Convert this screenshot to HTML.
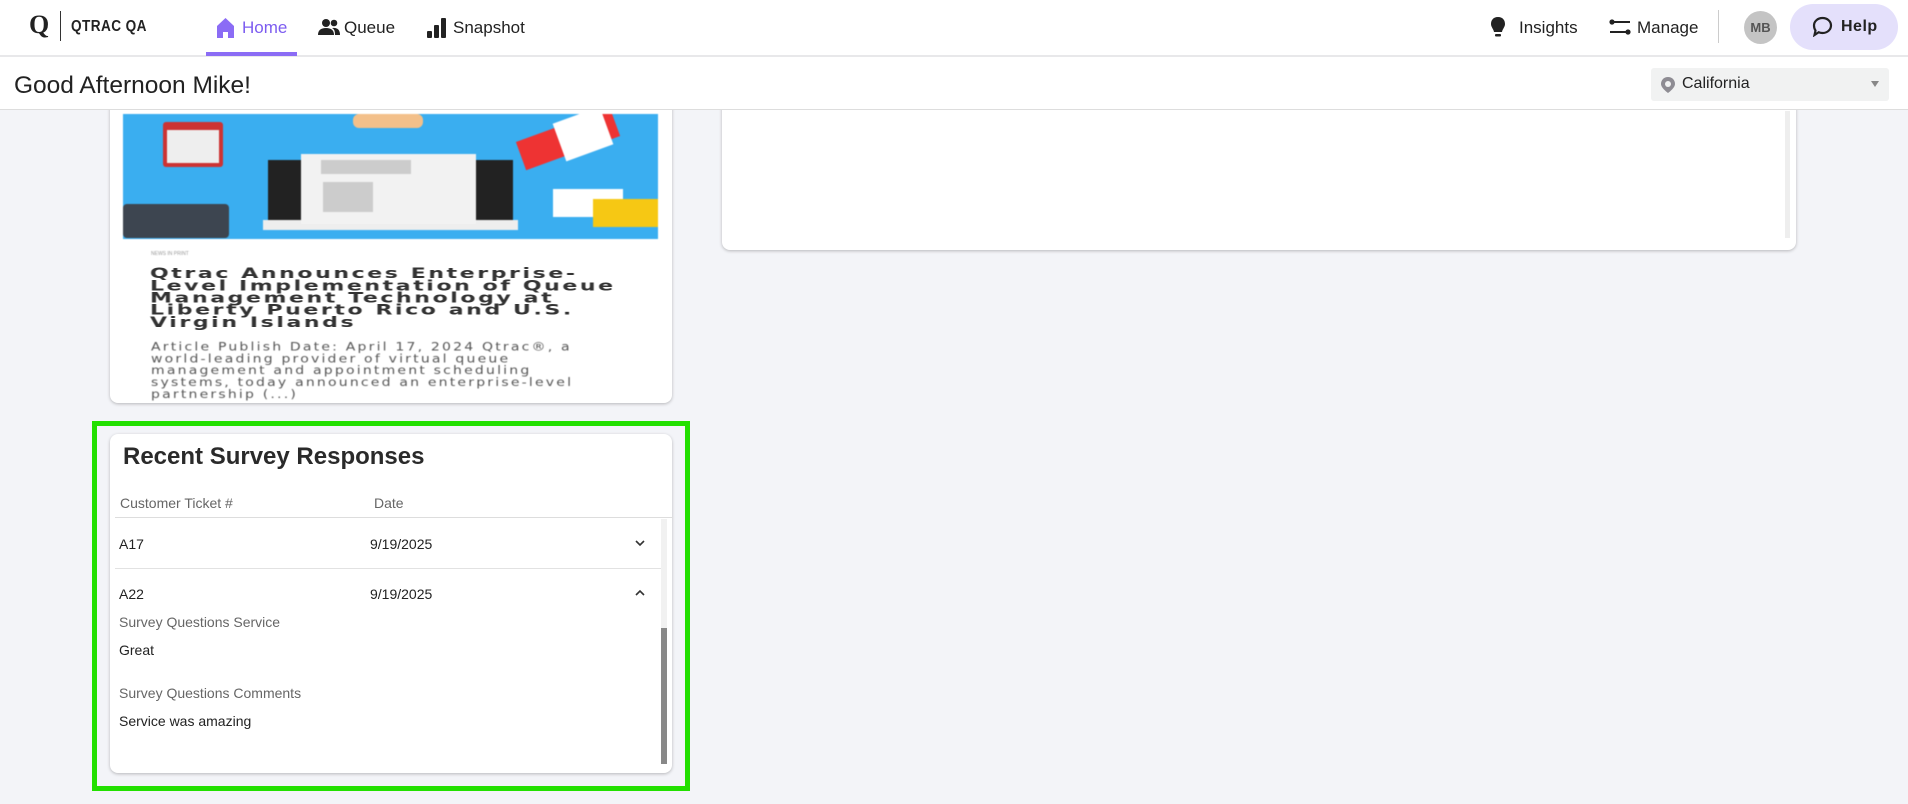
<!DOCTYPE html>
<html><head><meta charset="utf-8">
<style>
*{box-sizing:border-box;margin:0;padding:0}
body{width:1908px;height:804px;overflow:hidden;background:#f3f4f8;font-family:"Liberation Sans",sans-serif;color:#222;position:relative}
.abs{position:absolute}
.nav{left:0;top:0;width:1908px;height:57px;background:#fff;border-bottom:2px solid #e8e8ea}
.sub{left:0;top:57px;width:1908px;height:53px;background:#fff;border-bottom:1px solid #ddd}
.navtxt{font-size:17px;color:#222;top:18px}
.card{background:#fff;border-radius:8px;box-shadow:0 1px 3px rgba(0,0,0,.25)}
</style></head><body>
<div class="abs card" style="left:110px;top:90px;width:562px;height:313px;border-top-left-radius:0;border-top-right-radius:0"></div>
<div class="abs card" style="left:722px;top:90px;width:1074px;height:160px;border-top-left-radius:0;border-top-right-radius:0"></div>
<div class="abs" style="left:1785px;top:111px;width:5px;height:127px;background:#eee"></div>

<div class="abs nav"></div>
<div class="abs" style="left:29px;top:12px;font-family:'Liberation Serif',serif;font-weight:bold;font-size:26px;line-height:26px">Q</div>
<div class="abs" style="left:60px;top:11px;width:1px;height:30px;background:#333"></div>
<div class="abs" style="left:71px;top:18px;font-size:16px;font-weight:bold;letter-spacing:0.5px;transform:scaleX(.85);transform-origin:left">QTRAC QA</div>
<svg class="abs" style="left:215px;top:17px" width="21" height="22" viewBox="0 0 21 22"><path d="M2 9 L10.5 1 L19 9 V21 H13 V15 H8 V21 H2Z" fill="#8b6cf5"/></svg>
<div class="abs navtxt" style="left:242px;color:#7c5cf0">Home</div>
<div class="abs" style="left:206px;top:52px;width:91px;height:4px;background:#8b6cf5"></div>
<svg class="abs" style="left:318px;top:19px" width="22" height="16" viewBox="0 0 22 16"><circle cx="8" cy="4" r="4" fill="#222"/><circle cx="16" cy="4" r="3.3" fill="#222"/><path d="M0 16 Q0 9 8 9 Q16 9 16 16Z" fill="#222"/><path d="M17 16 Q17 10 14 9 Q22 8 22 16Z" fill="#222"/></svg>
<div class="abs navtxt" style="left:344px">Queue</div>
<svg class="abs" style="left:427px;top:17px" width="20" height="21" viewBox="0 0 20 21"><rect x="0" y="14" width="5" height="7" rx="1" fill="#222"/><rect x="7" y="8" width="5" height="13" rx="1" fill="#222"/><rect x="14" y="1" width="5" height="20" rx="1" fill="#222"/></svg>
<div class="abs navtxt" style="left:453px">Snapshot</div>
<svg class="abs" style="left:1491px;top:17px" width="14" height="21" viewBox="0 0 14 21"><path d="M7 0 C2 0 0 3.5 0 7 C0 10 2.5 12 3 15 H11 C11.5 12 14 10 14 7 C14 3.5 12 0 7 0Z" fill="#222"/><rect x="4" y="17" width="6" height="2.5" rx="1" fill="#222"/></svg>
<div class="abs navtxt" style="left:1519px">Insights</div>
<svg class="abs" style="left:1609px;top:19px" width="22" height="17" viewBox="0 0 22 17"><circle cx="3" cy="3" r="2.6" fill="#222"/><line x1="3" y1="3" x2="21" y2="3" stroke="#222" stroke-width="2"/><circle cx="19" cy="13" r="2.6" fill="#222"/><line x1="1" y1="13" x2="19" y2="13" stroke="#222" stroke-width="2"/></svg>
<div class="abs navtxt" style="left:1637px">Manage</div>
<div class="abs" style="left:1718px;top:10px;width:1px;height:33px;background:#ccc"></div>
<div class="abs" style="left:1744px;top:11px;width:33px;height:33px;border-radius:50%;background:#c4c4c4;color:#555;font-size:13px;font-weight:bold;text-align:center;line-height:33px">MB</div>
<div class="abs" style="left:1790px;top:4px;width:108px;height:46px;border-radius:23px;background:#e4e0fb"></div>
<svg class="abs" style="left:1812px;top:16px" width="21" height="21" viewBox="0 0 21 21"><path d="M10.5 2 C15.5 2 19 5.5 19 9.5 C19 13.5 15.5 17 10.5 17 C9 17 7.8 16.7 6.7 16.2 L2.5 19 L3.5 14.5 C2.5 13 2 11.5 2 9.5 C2 5.5 5.5 2 10.5 2Z" fill="none" stroke="#222" stroke-width="2.2"/></svg>
<div class="abs" style="left:1841px;top:18px;font-size:16px;font-weight:bold;letter-spacing:.5px">Help</div>

<div class="abs sub"></div>
<div class="abs" style="left:14px;top:72px;font-size:24.5px;color:#222">Good Afternoon Mike!</div>
<div class="abs" style="left:1651px;top:68px;width:238px;height:33px;background:#f1f2f2;border-radius:3px"></div>
<svg class="abs" style="left:1661px;top:77px" width="14" height="16" viewBox="0 0 14 16"><path d="M7 0 C11 0 14 3 14 7 C14 11 7 16 7 16 C7 16 0 11 0 7 C0 3 3 0 7 0Z" fill="#8e8c93"/><circle cx="7" cy="7" r="3" fill="#f1f2f2"/></svg>
<div class="abs" style="left:1682px;top:75px;font-size:16px;color:#222">California</div>
<div class="abs" style="left:1871px;top:81px;width:0;height:0;border-left:4px solid transparent;border-right:4px solid transparent;border-top:6px solid #888"></div>

<div class="abs" style="left:123px;top:114px;width:535px;height:125px;background:#3aaef0;overflow:hidden;filter:blur(.6px)">
  <div class="abs" style="left:40px;top:8px;width:60px;height:45px;background:#c33;border-radius:3px"></div>
  <div class="abs" style="left:44px;top:16px;width:52px;height:33px;background:#eee"></div>
  <div class="abs" style="left:0;top:90px;width:106px;height:34px;background:#3d4550;border-radius:4px"></div>
  <div class="abs" style="left:145px;top:46px;width:245px;height:68px;background:#222"></div>
  <div class="abs" style="left:140px;top:106px;width:255px;height:10px;background:#eee"></div>
  <div class="abs" style="left:178px;top:40px;width:175px;height:70px;background:#f2f2f2"></div>
  <div class="abs" style="left:198px;top:46px;width:90px;height:14px;background:#ccc"></div>
  <div class="abs" style="left:200px;top:68px;width:50px;height:30px;background:#ccc"></div>
  <div class="abs" style="left:395px;top:10px;width:100px;height:30px;background:#e33;transform:rotate(-20deg)"></div>
  <div class="abs" style="left:435px;top:0;width:50px;height:40px;background:#fff;transform:rotate(-20deg)"></div>
  <div class="abs" style="left:430px;top:75px;width:70px;height:28px;background:#fff"></div>
  <div class="abs" style="left:470px;top:85px;width:70px;height:28px;background:#f6c814"></div>
  <div class="abs" style="left:230px;top:0;width:70px;height:14px;background:#f3c08a;border-radius:6px"></div>
</div>
<div class="abs" style="left:151px;top:251px;font-size:5px;color:#999;filter:blur(.4px)">NEWS IN PRINT</div>
<div class="abs" style="left:150px;top:268px;white-space:nowrap;font-family:'DejaVu Sans',sans-serif;font-weight:bold;font-size:22px;line-height:19px;color:#333;letter-spacing:2.6px;filter:blur(.5px);transform:scaleY(.64);transform-origin:top">Qtrac Announces Enterprise-<br>Level Implementation of Queue<br>Management Technology at<br>Liberty Puerto Rico and U.S.<br>Virgin Islands</div>
<div class="abs" style="left:151px;top:341px;white-space:nowrap;font-family:'DejaVu Sans',sans-serif;font-size:14px;line-height:14px;color:#555;letter-spacing:2.2px;filter:blur(.5px);transform:scaleY(.85);transform-origin:top">Article Publish Date: April 17, 2024 Qtrac®, a<br>world-leading provider of virtual queue<br>management and appointment scheduling<br>systems, today announced an enterprise-level<br>partnership (...)</div>

<div class="abs" style="left:92px;top:421px;width:598px;height:370px;border:5px solid #22e000"></div>
<div class="abs card" style="left:110px;top:434px;width:562px;height:339px"></div>
<div class="abs" style="left:123px;top:443px;font-size:24px;font-weight:bold;color:#2a2a2a">Recent Survey Responses</div>
<div class="abs" style="left:120px;top:495px;font-size:14px;color:#666">Customer Ticket #</div>
<div class="abs" style="left:374px;top:495px;font-size:14px;color:#666">Date</div>
<div class="abs" style="left:115px;top:517px;width:558px;height:1px;background:#ddd"></div>
<div class="abs" style="left:115px;top:568px;width:546px;height:1px;background:#e2e2e2"></div>
<div class="abs" style="left:119px;top:536px;font-size:14px;color:#222">A17</div>
<div class="abs" style="left:370px;top:536px;font-size:14px;color:#222">9/19/2025</div>
<svg class="abs" style="left:634px;top:539px" width="12" height="8" viewBox="0 0 12 8"><path d="M2 2 L6 6 L10 2" fill="none" stroke="#333" stroke-width="1.6"/></svg>
<div class="abs" style="left:119px;top:586px;font-size:14px;color:#222">A22</div>
<div class="abs" style="left:370px;top:586px;font-size:14px;color:#222">9/19/2025</div>
<svg class="abs" style="left:634px;top:589px" width="12" height="8" viewBox="0 0 12 8"><path d="M2 6 L6 2 L10 6" fill="none" stroke="#333" stroke-width="1.6"/></svg>
<div class="abs" style="left:119px;top:614px;font-size:14px;color:#666">Survey Questions Service</div>
<div class="abs" style="left:119px;top:642px;font-size:14px;color:#222">Great</div>
<div class="abs" style="left:119px;top:685px;font-size:14px;color:#666">Survey Questions Comments</div>
<div class="abs" style="left:119px;top:713px;font-size:14px;color:#222">Service was amazing</div>
<div class="abs" style="left:661px;top:519px;width:6px;height:245px;background:#f1f1f1"></div>
<div class="abs" style="left:661px;top:628px;width:6px;height:136px;background:#888"></div>
</body></html>
